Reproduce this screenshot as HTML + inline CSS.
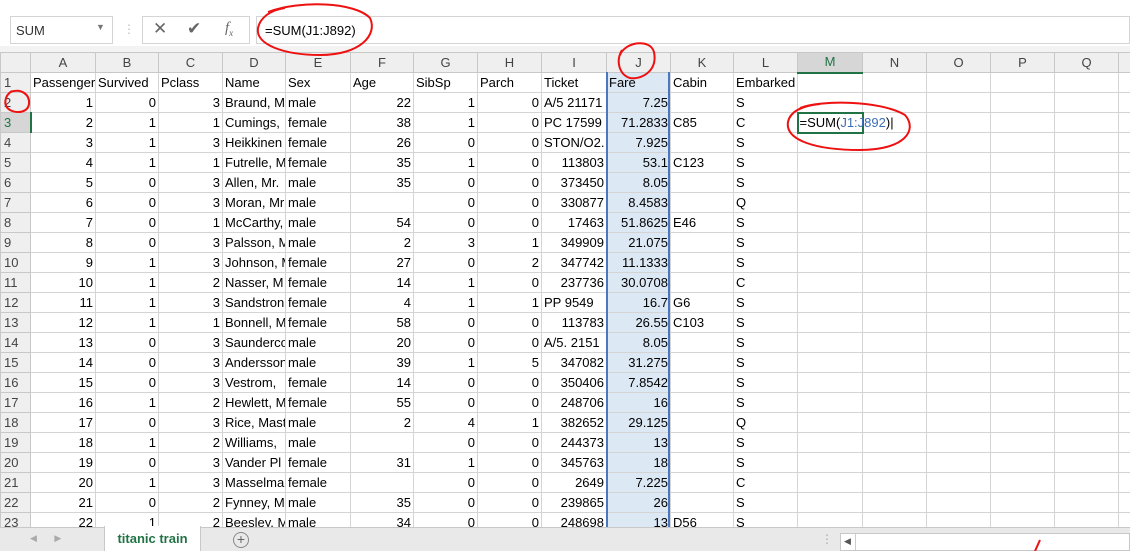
<!DOCTYPE html><html><head><meta charset="utf-8"><style>
*{margin:0;padding:0;box-sizing:border-box}
body{width:1130px;height:551px;overflow:hidden;background:#fff;font-family:"Liberation Sans",sans-serif;font-size:13px;color:#000;position:relative}
.abs{position:absolute}
table{position:absolute;left:0;top:52px;width:1130px;border-collapse:collapse;table-layout:fixed}
td{height:20px;border:1px solid #d4d4d4;white-space:nowrap;overflow:hidden;padding:0 2px;line-height:18px}
tr.h td{background:#efefef;text-align:center;color:#444;border-color:#c8c8c8;height:20px}
td.r{background:#efefef;color:#444;text-align:left;padding-left:3px;border-color:#c8c8c8}
.n{text-align:right}
.j{background:#dde8f5}
</style></head><body>
<div class="abs" style="left:0;top:0;width:1130px;height:52px;background:#fff"></div>
<div class="abs" style="left:0;top:46px;width:1130px;height:6px;background:#f3f3f3"></div>
<div class="abs" style="left:10px;top:16px;width:103px;height:28px;border:1px solid #d4d4d4;padding:6px 5px;color:#333">SUM<span style="position:absolute;left:85px;top:5px;font-size:9px;color:#777">▼</span></div>
<div class="abs" style="left:123px;top:22px;color:#bbb;font-size:12px">⋮</div>
<div class="abs" style="left:142px;top:16px;width:108px;height:28px;border:1px solid #d4d4d4;color:#666;font-size:17px"><span style="position:absolute;left:10px;top:2px">✕</span><span style="position:absolute;left:44px;top:2px">✔</span><span style="position:absolute;left:82px;top:3px;font-family:'Liberation Serif',serif;font-style:italic;font-size:15px">f<sub style="font-size:9px">x</sub></span></div>
<div class="abs" style="left:256px;top:16px;width:874px;height:28px;border:1px solid #d4d4d4;padding:6px 8px">=SUM(J1:J892)</div>
<table>
<colgroup><col style="width:30px"><col style="width:65px"><col style="width:63px"><col style="width:64px"><col style="width:63px"><col style="width:65px"><col style="width:63px"><col style="width:64px"><col style="width:64px"><col style="width:65px"><col style="width:64px"><col style="width:63px"><col style="width:64px"><col style="width:65px"><col style="width:64px"><col style="width:64px"><col style="width:64px"><col style="width:64px"><col style="width:12px"></colgroup>
<tr class="h"><td style="background:#efefef"></td><td>A</td><td>B</td><td>C</td><td>D</td><td>E</td><td>F</td><td>G</td><td>H</td><td>I</td><td>J</td><td>K</td><td>L</td><td style="background:#d6d6d6;border-bottom:2px solid #217346;color:#217346">M</td><td>N</td><td>O</td><td>P</td><td>Q</td><td></td></tr>
<tr><td class="r">1</td><td>Passenger</td><td>Survived</td><td>Pclass</td><td>Name</td><td>Sex</td><td>Age</td><td>SibSp</td><td>Parch</td><td>Ticket</td><td class="j">Fare</td><td>Cabin</td><td>Embarked</td><td></td><td></td><td></td><td></td><td></td><td></td></tr>
<tr><td class="r">2</td><td class="n">1</td><td class="n">0</td><td class="n">3</td><td>Braund, M</td><td>male</td><td class="n">22</td><td class="n">1</td><td class="n">0</td><td>A/5 21171</td><td class="n j">7.25</td><td></td><td>S</td><td></td><td></td><td></td><td></td><td></td><td></td></tr>
<tr><td class="r" style="background:#d6d6d6;color:#217346;border-right:2px solid #217346">3</td><td class="n">2</td><td class="n">1</td><td class="n">1</td><td>Cumings,</td><td>female</td><td class="n">38</td><td class="n">1</td><td class="n">0</td><td>PC 17599</td><td class="n j">71.2833</td><td>C85</td><td>C</td><td style="border:2px solid #217346;overflow:visible;position:relative;padding-left:1px">=SUM(<span style="color:#3d6fb5">J1:J892</span>)|</td><td></td><td></td><td></td><td></td><td></td></tr>
<tr><td class="r">4</td><td class="n">3</td><td class="n">1</td><td class="n">3</td><td>Heikkinen</td><td>female</td><td class="n">26</td><td class="n">0</td><td class="n">0</td><td>STON/O2.</td><td class="n j">7.925</td><td></td><td>S</td><td></td><td></td><td></td><td></td><td></td><td></td></tr>
<tr><td class="r">5</td><td class="n">4</td><td class="n">1</td><td class="n">1</td><td>Futrelle, M</td><td>female</td><td class="n">35</td><td class="n">1</td><td class="n">0</td><td class="n">113803</td><td class="n j">53.1</td><td>C123</td><td>S</td><td></td><td></td><td></td><td></td><td></td><td></td></tr>
<tr><td class="r">6</td><td class="n">5</td><td class="n">0</td><td class="n">3</td><td>Allen, Mr.</td><td>male</td><td class="n">35</td><td class="n">0</td><td class="n">0</td><td class="n">373450</td><td class="n j">8.05</td><td></td><td>S</td><td></td><td></td><td></td><td></td><td></td><td></td></tr>
<tr><td class="r">7</td><td class="n">6</td><td class="n">0</td><td class="n">3</td><td>Moran, Mr</td><td>male</td><td class="n"></td><td class="n">0</td><td class="n">0</td><td class="n">330877</td><td class="n j">8.4583</td><td></td><td>Q</td><td></td><td></td><td></td><td></td><td></td><td></td></tr>
<tr><td class="r">8</td><td class="n">7</td><td class="n">0</td><td class="n">1</td><td>McCarthy,</td><td>male</td><td class="n">54</td><td class="n">0</td><td class="n">0</td><td class="n">17463</td><td class="n j">51.8625</td><td>E46</td><td>S</td><td></td><td></td><td></td><td></td><td></td><td></td></tr>
<tr><td class="r">9</td><td class="n">8</td><td class="n">0</td><td class="n">3</td><td>Palsson, M</td><td>male</td><td class="n">2</td><td class="n">3</td><td class="n">1</td><td class="n">349909</td><td class="n j">21.075</td><td></td><td>S</td><td></td><td></td><td></td><td></td><td></td><td></td></tr>
<tr><td class="r">10</td><td class="n">9</td><td class="n">1</td><td class="n">3</td><td>Johnson, M</td><td>female</td><td class="n">27</td><td class="n">0</td><td class="n">2</td><td class="n">347742</td><td class="n j">11.1333</td><td></td><td>S</td><td></td><td></td><td></td><td></td><td></td><td></td></tr>
<tr><td class="r">11</td><td class="n">10</td><td class="n">1</td><td class="n">2</td><td>Nasser, M</td><td>female</td><td class="n">14</td><td class="n">1</td><td class="n">0</td><td class="n">237736</td><td class="n j">30.0708</td><td></td><td>C</td><td></td><td></td><td></td><td></td><td></td><td></td></tr>
<tr><td class="r">12</td><td class="n">11</td><td class="n">1</td><td class="n">3</td><td>Sandstron</td><td>female</td><td class="n">4</td><td class="n">1</td><td class="n">1</td><td>PP 9549</td><td class="n j">16.7</td><td>G6</td><td>S</td><td></td><td></td><td></td><td></td><td></td><td></td></tr>
<tr><td class="r">13</td><td class="n">12</td><td class="n">1</td><td class="n">1</td><td>Bonnell, M</td><td>female</td><td class="n">58</td><td class="n">0</td><td class="n">0</td><td class="n">113783</td><td class="n j">26.55</td><td>C103</td><td>S</td><td></td><td></td><td></td><td></td><td></td><td></td></tr>
<tr><td class="r">14</td><td class="n">13</td><td class="n">0</td><td class="n">3</td><td>Saundercock</td><td>male</td><td class="n">20</td><td class="n">0</td><td class="n">0</td><td>A/5. 2151</td><td class="n j">8.05</td><td></td><td>S</td><td></td><td></td><td></td><td></td><td></td><td></td></tr>
<tr><td class="r">15</td><td class="n">14</td><td class="n">0</td><td class="n">3</td><td>Andersson</td><td>male</td><td class="n">39</td><td class="n">1</td><td class="n">5</td><td class="n">347082</td><td class="n j">31.275</td><td></td><td>S</td><td></td><td></td><td></td><td></td><td></td><td></td></tr>
<tr><td class="r">16</td><td class="n">15</td><td class="n">0</td><td class="n">3</td><td>Vestrom,</td><td>female</td><td class="n">14</td><td class="n">0</td><td class="n">0</td><td class="n">350406</td><td class="n j">7.8542</td><td></td><td>S</td><td></td><td></td><td></td><td></td><td></td><td></td></tr>
<tr><td class="r">17</td><td class="n">16</td><td class="n">1</td><td class="n">2</td><td>Hewlett, M</td><td>female</td><td class="n">55</td><td class="n">0</td><td class="n">0</td><td class="n">248706</td><td class="n j">16</td><td></td><td>S</td><td></td><td></td><td></td><td></td><td></td><td></td></tr>
<tr><td class="r">18</td><td class="n">17</td><td class="n">0</td><td class="n">3</td><td>Rice, Mast</td><td>male</td><td class="n">2</td><td class="n">4</td><td class="n">1</td><td class="n">382652</td><td class="n j">29.125</td><td></td><td>Q</td><td></td><td></td><td></td><td></td><td></td><td></td></tr>
<tr><td class="r">19</td><td class="n">18</td><td class="n">1</td><td class="n">2</td><td>Williams,</td><td>male</td><td class="n"></td><td class="n">0</td><td class="n">0</td><td class="n">244373</td><td class="n j">13</td><td></td><td>S</td><td></td><td></td><td></td><td></td><td></td><td></td></tr>
<tr><td class="r">20</td><td class="n">19</td><td class="n">0</td><td class="n">3</td><td>Vander Pl</td><td>female</td><td class="n">31</td><td class="n">1</td><td class="n">0</td><td class="n">345763</td><td class="n j">18</td><td></td><td>S</td><td></td><td></td><td></td><td></td><td></td><td></td></tr>
<tr><td class="r">21</td><td class="n">20</td><td class="n">1</td><td class="n">3</td><td>Masselma</td><td>female</td><td class="n"></td><td class="n">0</td><td class="n">0</td><td class="n">2649</td><td class="n j">7.225</td><td></td><td>C</td><td></td><td></td><td></td><td></td><td></td><td></td></tr>
<tr><td class="r">22</td><td class="n">21</td><td class="n">0</td><td class="n">2</td><td>Fynney, M</td><td>male</td><td class="n">35</td><td class="n">0</td><td class="n">0</td><td class="n">239865</td><td class="n j">26</td><td></td><td>S</td><td></td><td></td><td></td><td></td><td></td><td></td></tr>
<tr><td class="r">23</td><td class="n">22</td><td class="n">1</td><td class="n">2</td><td>Beesley, M</td><td>male</td><td class="n">34</td><td class="n">0</td><td class="n">0</td><td class="n">248698</td><td class="n j">13</td><td>D56</td><td>S</td><td></td><td></td><td></td><td></td><td></td><td></td></tr>
</table>
<div class="abs" style="left:606px;top:72px;width:2px;height:456px;background:#4a78c0"></div>
<div class="abs" style="left:668px;top:72px;width:2px;height:456px;background:#4a78c0"></div>
<div class="abs" style="left:0;top:527px;width:1130px;height:24px;background:#e9e9e9;border-top:1px solid #c8c8c8"></div>
<div class="abs" style="left:30px;top:533px;color:#aaa;font-size:9px">◀&nbsp;&nbsp;&nbsp;&nbsp;&nbsp;&nbsp;&nbsp;▶</div>
<div class="abs" style="left:104px;top:526px;width:97px;height:25px;background:#fff;border-left:1px solid #c8c8c8;border-right:1px solid #c8c8c8;color:#217346;font-weight:bold;text-align:center;padding-top:5px">titanic train</div>
<div class="abs" style="left:233px;top:532px;width:16px;height:16px;border:1px solid #888;border-radius:50%;text-align:center;line-height:13px;color:#666;font-size:14px">+</div>
<div class="abs" style="left:821px;top:532px;color:#aaa;font-size:12px">⋮</div>
<div class="abs" style="left:840px;top:533px;width:290px;height:18px;background:#fff;border:1px solid #c8c8c8"><span style="position:absolute;left:3px;top:2px;font-size:9px;color:#555">◀</span><div style="position:absolute;left:14px;top:0;width:1px;height:16px;background:#ccc"></div></div>
<svg class="abs" style="left:0;top:0" width="1130" height="551">
<g fill="none" stroke="#e11" stroke-width="2">
<path d="M268 12 C300 0 355 2 370 18 C378 35 360 55 320 55 C285 55 255 45 258 28 C260 18 270 10 285 8"/>
<path d="M620 55 C625 42 650 38 654 52 C658 72 640 80 630 78 C620 75 615 62 622 50"/>
<path d="M800 108 C820 100 880 100 905 115 C918 130 905 150 860 150 C815 150 785 140 788 122 C790 112 800 106 820 104"/>
<path d="M10 92 C22 88 30 95 29 104 C28 112 18 114 10 110 C3 106 4 96 12 91"/>
<path d="M1040 540 L1035 551"/>
</g></svg>
</body></html>
